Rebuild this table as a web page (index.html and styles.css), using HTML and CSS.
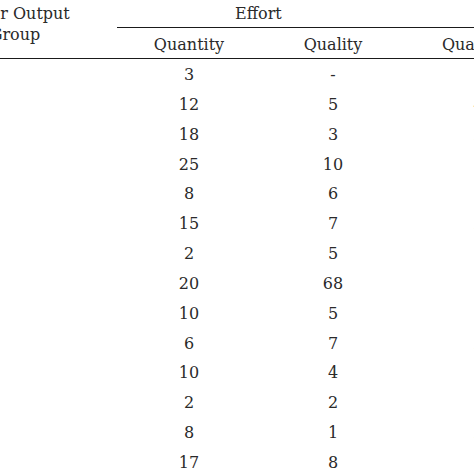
FILE: index.html
```html
<!DOCTYPE html>
<html>
<head>
<meta charset="utf-8">
<link rel="stylesheet" href="styles.css">
</head>
<body>
<table class="data">
  <colgroup>
    <col class="c-label">
    <col class="c-num">
    <col class="c-num">
    <col class="c-num">
    <col class="c-num">
  </colgroup>
  <thead>
    <tr class="h1">
      <th class="label" rowspan="2">Labor Output<br>Group</th>
      <th class="group effort" colspan="2">Effort</th>
      <th class="group" colspan="2">Time</th>
    </tr>
    <tr class="h2">
      <th>Quantity</th>
      <th>Quality</th>
      <th>Quantity</th>
      <th>Quality</th>
    </tr>
  </thead>
  <tbody>
    <tr><td></td><td>3</td><td>-</td><td>-</td><td>-</td></tr>
    <tr><td></td><td>12</td><td>5</td><td>4</td><td>2</td></tr>
    <tr><td></td><td>18</td><td>3</td><td>2</td><td>1</td></tr>
    <tr><td></td><td>25</td><td>10</td><td>7</td><td>3</td></tr>
    <tr><td></td><td>8</td><td>6</td><td>3</td><td>2</td></tr>
    <tr><td></td><td>15</td><td>7</td><td>2</td><td>4</td></tr>
    <tr><td></td><td>2</td><td>5</td><td>1</td><td>1</td></tr>
    <tr><td></td><td>20</td><td>68</td><td>5</td><td>9</td></tr>
    <tr><td></td><td>10</td><td>5</td><td>3</td><td>2</td></tr>
    <tr><td></td><td>6</td><td>7</td><td>2</td><td>3</td></tr>
    <tr><td></td><td>10</td><td>4</td><td>1</td><td>2</td></tr>
    <tr><td></td><td>2</td><td>2</td><td>3</td><td>1</td></tr>
    <tr><td></td><td>8</td><td>1</td><td>2</td><td>4</td></tr>
    <tr><td></td><td>17</td><td>8</td><td>3</td><td>2</td></tr>
  </tbody>
</table>
</body>
</html>
```

FILE: styles.css
```css
html, body {
  margin: 0;
  padding: 0;
  background: #ffffff;
  overflow: hidden;
}

.data {
  margin-left: -69px;
  width: 762px;
  table-layout: fixed;
  border-collapse: collapse;
  font-family: "DejaVu Serif", serif;
  font-size: 16px;
  color: #2a2a2a;
}

.c-label { width: 186px; }
.c-num { width: 144px; }

.data th,
.data td {
  padding: 0;
  text-align: center;
  font-weight: normal;
}

.h1 th.group {
  height: 27px;
  line-height: 19px;
  vertical-align: bottom;
  padding-bottom: 3.5px;
  box-sizing: border-box;
  border-bottom: 1.4px solid #1a1a1a;
}

.h1 th.effort {
  text-align: left;
  padding-left: 118px;
}

th.label {
  vertical-align: top;
  line-height: 21px;
  padding-top: 3px;
  padding-right: 18px;
  border-bottom: 1.5px solid #1a1a1a;
}

.h2 th {
  height: 30px;
  line-height: 26px;
  padding-top: 4px;
  box-sizing: border-box;
  border-bottom: 1.5px solid #1a1a1a;
}

tbody td {
  height: 29.85px;
  line-height: 29.85px;
}

tbody tr:first-child td {
  padding-top: 1.5px;
}

tbody td:nth-child(4) {
  padding-left: 3px;
}
```
